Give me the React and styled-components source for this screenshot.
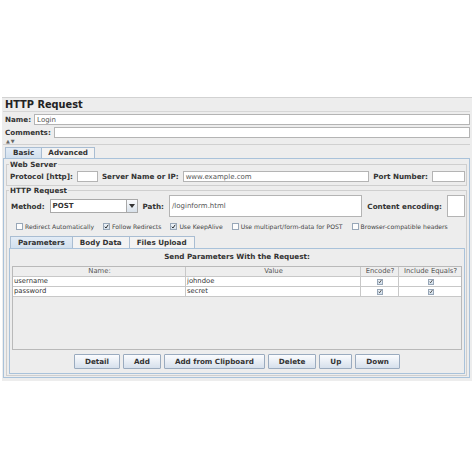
import React from "react";
import styled, { createGlobalStyle } from "styled-components";

const Global = createGlobalStyle`
  html, body { margin: 0; padding: 0; background: #ffffff; }
  body { font-family: "DejaVu Sans", "Liberation Sans", sans-serif; }
  * { box-sizing: border-box; }
`;

const Page = styled.div`
  width: 474px;
  height: 474px;
  padding-top: 97px;
  padding-left: 2px;
`;

const Window = styled.div`
  width: 470px;
  height: 284px;
  background: #ededed;
  border-top: 1px solid #d2d2d2;
  padding: 0 2px 0 1px;
  display: flex;
  flex-direction: column;
`;

const Title = styled.div`
  height: 14px;
  line-height: 13px;
  font-size: 9.8px;
  font-weight: bold;
  color: #222;
  padding-left: 2px;
  border-bottom: 1px solid #d6d6d6;
`;

const FieldRow = styled.div`
  display: flex;
  align-items: center;
  gap: 3px;
  height: 11px;
  margin-top: ${(p) => p.$top || 0}px;
  padding-left: 2px;
`;

const Label = styled.span`
  font-size: 7.2px;
  font-weight: bold;
  color: #333;
  white-space: nowrap;
  line-height: 9px;
`;

const Field = styled.div`
  flex: ${(p) => (p.$w ? "none" : 1)};
  width: ${(p) => (p.$w ? `${p.$w}px` : "auto")};
  height: ${(p) => p.$h || 11}px;
  background: #fff;
  border: 1px solid #b4b4b4;
  font-size: 7px;
  color: #555;
  padding-left: 2px;
  display: flex;
  align-items: center;
  white-space: nowrap;
  overflow: hidden;
`;

const Arrows = styled.div`
  height: 7px;
  line-height: 6px;
  font-size: 5px;
  color: #666;
  padding-left: 3px;
  border-bottom: 1px solid #d0d0d0;
  letter-spacing: 1px;
`;

const TabStrip = styled.div`
  display: flex;
  height: ${(p) => p.$h || 11}px;
  margin-top: ${(p) => p.$top || 0}px;
  padding-left: ${(p) => p.$left || 0}px;
`;

const Tab = styled.div`
  padding: 0 ${(p) => p.$pad || 7}px;
  font-size: 7.2px;
  font-weight: bold;
  color: #333;
  line-height: ${(p) => p.$lh || 10}px;
  border: 1px solid #a9bdd2;
  border-bottom: none;
  margin-left: -1px;
  background: ${(p) =>
    p.$active ? "linear-gradient(#e3ecf6, #d2e0ee)" : "#f3f3f3"};
  &:first-child { margin-left: 0; }
`;

const Panel = styled.div`
  height: 220px;
  border: 1px solid #a9c2da;
  padding: 1px 2px 1px 2px;
  display: flex;
  flex-direction: column;
`;

const Group = styled.fieldset`
  margin: 0;
  min-width: 0;
  border: 1px solid #cfcfcf;
  padding: 0 1px ${(p) => p.$bottom || 0}px 2px;
  flex: ${(p) => (p.$grow ? 1 : "none")};
`;

const Legend = styled.legend`
  padding: 0 1px;
  font-size: 7.2px;
  font-weight: bold;
  color: #333;
  line-height: 9px;
`;

const Row = styled.div`
  display: flex;
  align-items: center;
  gap: ${(p) => p.$gap || 4}px;
  height: ${(p) => p.$h || 11}px;
  margin-top: ${(p) => p.$top || 0}px;
  padding-left: ${(p) => p.$left || 0}px;
`;

const Combo = styled.div`
  width: 88px;
  height: 14px;
  display: flex;
  border: 1px solid #a9a9a9;
  background: #fff;
`;

const ComboText = styled.div`
  flex: 1;
  font-size: 7px;
  font-weight: bold;
  color: #333;
  padding-left: 2px;
  line-height: 12px;
`;

const ComboButton = styled.div`
  width: 11px;
  border-left: 1px solid #a9a9a9;
  background: linear-gradient(#fafbfd, #d8e1ea);
  display: flex;
  align-items: center;
  justify-content: center;
`;

const CheckItem = styled.div`
  display: flex;
  align-items: center;
  gap: 2px;
  font-size: 6.1px;
  color: #444;
  white-space: nowrap;
`;

const Box = styled.div`
  width: ${(p) => p.$size || 7}px;
  height: ${(p) => p.$size || 7}px;
  border: 1px solid #98a7b8;
  background: ${(p) => (p.$checked ? "linear-gradient(#eef3f8, #d3dfeb)" : "#fdfdfd")};
  display: flex;
  align-items: center;
  justify-content: center;
`;

const SubPanel = styled.div`
  height: 126px;
  border: 1px solid #a9c2da;
  padding: 3px 1px 4px 1px;
  display: flex;
  flex-direction: column;
`;

const SubTitle = styled.div`
  text-align: center;
  font-size: 7.2px;
  font-weight: bold;
  color: #333;
  line-height: 10px;
`;

const TablePane = styled.div`
  flex: 1;
  margin: 4px 1px 0 1px;
  border: 1px solid #b9b9b9;
  background: #ededed;
`;

const TableRow = styled.div`
  display: grid;
  grid-template-columns: 173px 175px 38px 1fr;
  height: 10px;
  background: ${(p) => (p.$header ? "#eeeeee" : "#ffffff")};
  border-bottom: 1px solid #c8c8c8;
`;

const Cell = styled.div`
  border-right: 1px solid #c8c8c8;
  font-size: 6.8px;
  color: ${(p) => (p.$header ? "#555" : "#333")};
  line-height: 9px;
  padding-left: 1px;
  display: flex;
  align-items: center;
  justify-content: ${(p) => (p.$center ? "center" : "flex-start")};
  white-space: nowrap;
  overflow: hidden;
  &:last-child { border-right: none; }
`;

const ButtonRow = styled.div`
  display: flex;
  justify-content: center;
  gap: 3px;
  margin-top: 4px;
  height: 15px;
`;

const Button = styled.div`
  padding: 0 10px;
  border: 1px solid #9aabbf;
  border-radius: 1px;
  background: linear-gradient(#fbfcfe, #d6e0ec);
  font-size: 7.2px;
  font-weight: bold;
  color: #333;
  line-height: 13px;
  white-space: nowrap;
`;

const Check = ({ s = 6 }) => (
  <svg width={s} height={s} viewBox="0 0 10 10">
    <path d="M1.5 5.5 L4 8 L8.5 1.5" fill="none" stroke="#2b2b2b" strokeWidth="2" />
  </svg>
);

const CheckOpt = ({ checked, children }) => (
  <CheckItem>
    <Box $checked={checked}>{checked && <Check s={5} />}</Box>
    {children}
  </CheckItem>
);

const rows = [
  ["username", "johndoe"],
  ["password", "secret"],
];

export default function App() {
  return (
    <Page>
      <Global />
      <Window>
        <Title>HTTP Request</Title>
        <FieldRow $top={2}>
          <Label>Name:</Label>
          <Field>Login</Field>
        </FieldRow>
        <FieldRow $top={2}>
          <Label>Comments:</Label>
          <Field />
        </FieldRow>
        <Arrows>▲▼</Arrows>
        <TabStrip $top={2} $left={2}>
          <Tab $active $pad={7}>Basic</Tab>
          <Tab $pad={6}>Advanced</Tab>
        </TabStrip>
        <Panel>
          <Group $bottom={3}>
            <Legend>Web Server</Legend>
            <Row $top={2} $left={1} $gap={4}>
              <Label>Protocol [http]:</Label>
              <Field $w={21} />
              <Label>Server Name or IP:</Label>
              <Field>www.example.com</Field>
              <Label>Port Number:</Label>
              <Field $w={33} />
            </Row>
          </Group>
          <Group $grow $bottom={1}>
            <Legend>HTTP Request</Legend>
            <Row $h={22} $left={2} $gap={5}>
              <Label>Method:</Label>
              <Combo>
                <ComboText>POST</ComboText>
                <ComboButton>
                  <svg width="6" height="4" viewBox="0 0 6 4">
                    <path d="M0 0 L6 0 L3 4 Z" fill="#333" />
                  </svg>
                </ComboButton>
              </Combo>
              <Label>Path:</Label>
              <Field $h={22}>/loginform.html</Field>
              <Label>Content encoding:</Label>
              <Field $w={18} $h={22} />
            </Row>
            <Row $h={9} $top={5} $left={7} $gap={9}>
              <CheckOpt>Redirect Automatically</CheckOpt>
              <CheckOpt checked>Follow Redirects</CheckOpt>
              <CheckOpt checked>Use KeepAlive</CheckOpt>
              <CheckOpt>Use multipart/form-data for POST</CheckOpt>
              <CheckOpt>Browser-compatible headers</CheckOpt>
            </Row>
            <TabStrip $top={5} $left={1} $h={12}>
              <Tab $active $pad={7} $lh={11}>Parameters</Tab>
              <Tab $pad={7} $lh={11}>Body Data</Tab>
              <Tab $pad={7} $lh={11}>Files Upload</Tab>
            </TabStrip>
            <SubPanel>
              <SubTitle>Send Parameters With the Request:</SubTitle>
              <TablePane>
                <TableRow $header>
                  <Cell $header $center>Name:</Cell>
                  <Cell $header $center>Value</Cell>
                  <Cell $header $center>Encode?</Cell>
                  <Cell $header $center>Include Equals?</Cell>
                </TableRow>
                {rows.map(([n, v]) => (
                  <TableRow key={n}>
                    <Cell>{n}</Cell>
                    <Cell>{v}</Cell>
                    <Cell $center>
                      <Box $size={6} $checked><Check s={5} /></Box>
                    </Cell>
                    <Cell $center>
                      <Box $size={6} $checked><Check s={5} /></Box>
                    </Cell>
                  </TableRow>
                ))}
              </TablePane>
              <ButtonRow>
                <Button>Detail</Button>
                <Button>Add</Button>
                <Button>Add from Clipboard</Button>
                <Button>Delete</Button>
                <Button>Up</Button>
                <Button>Down</Button>
              </ButtonRow>
            </SubPanel>
          </Group>
        </Panel>
      </Window>
    </Page>
  );
}
